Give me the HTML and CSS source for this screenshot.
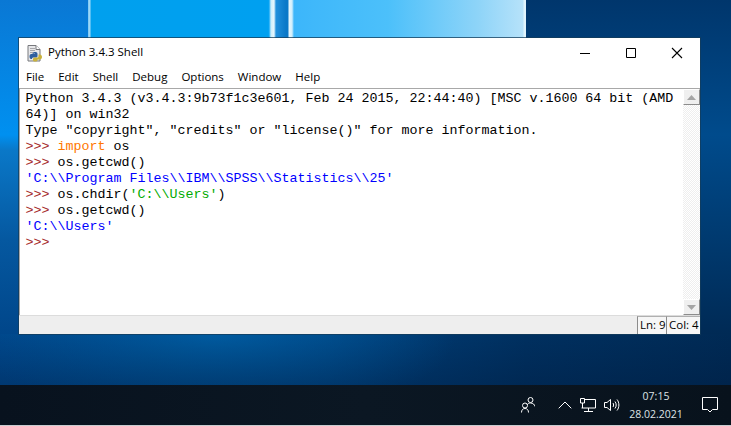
FILE: index.html
```html
<!DOCTYPE html>
<html lang="en">
<head>
<meta charset="utf-8">
<title>Python 3.4.3 Shell</title>
<link rel="stylesheet" href="styles.css">
</head>
<body>
<div class="desktop">
  <section class="window">
    <header class="titlebar">
      <svg class="app-icon" width="18" height="18" viewBox="0 0 18 18">
        <path d="M2 1.500h8l4 4V17H2z" fill="#e8e8ea" stroke="#77787c"/>
        <path d="M10 1.500v4h4" fill="#fff" stroke="#77787c"/>
        <path d="M4 4.500h5M4 6.500h5M4 8.500h3" stroke="#a8a8ac"/>
        <path d="M6.500 10c0-1.500 1-2 2.500-2s2.500 .5 2.500 2v2c0 1-1 1.500-2 1.500H7.500c-1 0-1.500 .5-1.500 1.500H5c-1 0-1.500-1-1.500-2.500s.7-2.500 1.700-2.500H9v-.5z" fill="#2f5f9f"/>
        <path d="M12.500 10.500h1.500c1 0 2 1 2 2.500s-1 2.500-2 2.500h-2.500v.8c0 .8-1 1.200-2.200 1.200S7 17 7 16.200V15c0-1 1-1.500 2-1.500h2c1 0 1.500-.5 1.500-1.500z" fill="#c9b23d"/>
      </svg>
      <span class="title">Python 3.4.3 Shell</span>
      <div class="caption">
        <svg class="caption-btn" width="46" height="29" viewBox="0 0 46 29"><path d="M18 15.500h10" stroke="#000" fill="none"/></svg>
        <svg class="caption-btn" width="46" height="29" viewBox="0 0 46 29"><path d="M18.500 10.500h9v9h-9z" stroke="#000" fill="none"/></svg>
        <svg class="caption-btn" width="46" height="29" viewBox="0 0 46 29"><path d="M18 10l10 10M28 10L18 20" stroke="#000" fill="none" stroke-width="1.100"/></svg>
      </div>
    </header>
    <nav class="menubar">
      <span>File</span><span>Edit</span><span>Shell</span><span>Debug</span><span>Options</span><span>Window</span><span>Help</span>
    </nav>
    <div class="editor">
      <pre class="text">Python 3.4.3 (v3.4.3:9b73f1c3e601, Feb 24 2015, 22:44:40) [MSC v.1600 64 bit (AMD
64)] on win32
Type "copyright", "credits" or "license()" for more information.
<span class="prompt">&gt;&gt;&gt; </span><span class="kw">import</span> os
<span class="prompt">&gt;&gt;&gt; </span>os.getcwd()
<span class="out">'C:\\Program Files\\IBM\\SPSS\\Statistics\\25'</span>
<span class="prompt">&gt;&gt;&gt; </span>os.chdir(<span class="str">'C:\\Users'</span>)
<span class="prompt">&gt;&gt;&gt; </span>os.getcwd()
<span class="out">'C:\\Users'</span>
<span class="prompt">&gt;&gt;&gt;</span></pre>
      <div class="scrollbar">
        <div class="arrow"><svg width="9" height="5" viewBox="0 0 9 5"><path d="M4.500 0L9 5H0z" fill="#a4a4a4"/></svg></div>
        <div class="track"></div>
        <div class="arrow"><svg width="9" height="5" viewBox="0 0 9 5"><path d="M0 0h9L4.500 5z" fill="#a4a4a4"/></svg></div>
      </div>
    </div>
    <footer class="statusbar">
      <span class="cell cell-ln">Ln: 9</span><span class="cell cell-col">Col: 4</span>
    </footer>
  </section>
</div>
<div class="taskbar">
  <svg class="tray people" width="14" height="16" viewBox="0 0 14 16" fill="none" stroke="#fff"><circle cx="9.500" cy="3" r="2.500"/><path d="M6 8c.8-1.500 2-2 3.500-2 2.500 0 4 1.500 4.500 3.500"/><circle cx="4" cy="8.500" r="2.500"/><path d="M.5 15.500c0-2.500 1.300-4 3.500-4s3.500 1.500 3.500 4"/></svg>
  <svg class="tray chevron" width="14" height="8" viewBox="0 0 14 8" fill="none" stroke="#fff"><path d="M.7 7.300L7 1l6.300 6.300"/></svg>
  <svg class="tray network" width="16" height="14" viewBox="0 0 16 14" fill="none" stroke="#fff"><path d="M4.500 1.500h11v8.500H1.500M.5 .5h4v4.500h-4zM2.500 5v5M8.500 10v3M4 13.500h9"/></svg>
  <svg class="tray volume" width="16" height="14" viewBox="0 0 16 14" fill="none" stroke="#fff"><path d="M.5 4.500h2.500L6.500 1.500v11l-3.500-3H.5z"/><path d="M9 5c.8 1.200.8 2.800 0 4M11 3.500c1.600 2 1.600 5 0 7M13 1.500c2.500 3 2.500 8 0 11"/></svg>
  <div class="clock"><span>07:15</span><span>28.02.2021</span></div>
  <svg class="tray notify" width="16" height="16" viewBox="0 0 16 16" fill="none" stroke="#fff"><path d="M.5 .5h15v12h-5l-2.500 2.500-2.500-2.500h-5z"/></svg>
</div>
<div class="edge"></div>
</body>
</html>
```

FILE: styles.css
```css
* { box-sizing: border-box; }
html, body { margin: 0; padding: 0; }
body {
  width: 731px;
  height: 426px;
  overflow: hidden;
  display: flex;
  flex-direction: column;
  font-family: "Open Sans", "Liberation Sans", sans-serif;
  background: #001a33;
}
.desktop {
  position: relative;
  height: 385px;
  flex: none;
  background:
    linear-gradient(90deg,
      #7cc6f2 0, #a8dcf8 2px, #00a0ee 3px, #00a0f0 180px,
      #0aa4f4 181px, #cdeefb 183px, #e8f7fd 186px, #2090dc 188px, #0a78c8 198px, #0a78c8 200px,
      #e8f7fd 201px, #d0eefc 204px, #3cb6fa 206px, #4cc0fa 300px, #8ed4f8 390px, #b6e2fa 435px, #e0f4fd 436px, #e0f4fd 438px) 88px 0 / 438px 40px no-repeat,
    linear-gradient(180deg, #0a78d4 0, #0090f0 135px, #0a78c8 150px, #0558a0 240px, #00468a 334px) 0 0 / 88px 334px no-repeat,
    linear-gradient(180deg, #00366c 0, #004b8c 135px, #002a55 334px) 526px 0 / 205px 334px no-repeat,
    linear-gradient(180deg, rgba(0, 20, 50, 0) 334px, rgba(0, 20, 50, .28) 385px),
    radial-gradient(ellipse 240px 90px at 215px 335px, #005ba0 0%, rgba(0,74,136,0) 100%),
    linear-gradient(90deg, #00468a 0%, #003f7a 45%, #003060 72%, #002a55 100%);
}
.window {
  position: absolute;
  left: 19px;
  top: 38px;
  width: 681px;
  height: 296px;
  display: flex;
  flex-direction: column;
  background: #fff;
  box-shadow: 0 0 0 1px rgba(20, 60, 90, .75);
}
.titlebar {
  flex: none;
  height: 29px;
  display: flex;
  align-items: center;
  padding-left: 7px;
}
.app-icon { flex: none; margin-right: 4px; }
.title { font-size: 11.5px; line-height: 14px; margin-top: -2px; color: #000; white-space: nowrap; }
.caption { margin-left: auto; display: flex; }
.caption-btn { display: block; }
.menubar {
  flex: none;
  height: 21px;
  display: flex;
  align-items: flex-start;
  gap: 14px;
  padding: 2px 0 0 7px;
  font-size: 11.5px;
  line-height: 16px;
  color: #000;
}
.editor {
  flex: none;
  height: 227px;
  display: flex;
  border-top: 1px solid #a8a8a8;
  border-left: 1px solid #a8a8a8;
}
.text {
  flex: 1;
  margin: 0;
  padding: 2px 0 0 5.500px;
  font-family: "Liberation Mono", monospace;
  font-size: 13.33px;
  line-height: 16px;
  color: #000;
  overflow: hidden;
}
.prompt { color: #a52a2a; }
.kw { color: #ff7700; }
.out { color: #0000ff; }
.str { color: #00aa00; }
.scrollbar {
  flex: none;
  width: 17px;
  display: flex;
  flex-direction: column;
  background: #fff;
}
.arrow {
  flex: none;
  height: 16px;
  display: flex;
  align-items: center;
  justify-content: center;
  background: #efefef;
  border: 1px solid;
  border-color: #fff #8c8c8c #8c8c8c #fff;
}
.track {
  flex: 1;
  background: repeating-conic-gradient(#eee 0 25%, #fff 0 50%) 0 0 / 2px 2px;
}
.statusbar {
  flex: 1;
  display: flex;
  justify-content: flex-end;
  align-items: stretch;
  background: #eeeeee;
  border-top: 1px solid #dcdcdc;
  font-size: 11.5px;
  line-height: 16px;
  color: #000;
}
.cell {
  display: flex;
  align-items: flex-start;
  padding-left: 2px;
  background: #f6f6f6;
  border-left: 1px solid #8c8c8c;
  border-top: 1px solid #b0b0b0;
  white-space: nowrap;
}
.cell-ln { width: 29px; }
.cell-col { width: 34px; }
.taskbar {
  flex: none;
  height: 40px;
  display: flex;
  align-items: center;
  background: linear-gradient(90deg, #08121e, #0b1723 50%, #08121c);
  color: #fff;
}
.tray { flex: none; display: block; }
.people { margin-left: 521px; }
.chevron { margin-left: 23px; }
.network { margin-left: 8px; }
.volume { margin-left: 8px; }
.clock {
  flex: none;
  width: 60px;
  margin-left: 6px;
  display: flex;
  flex-direction: column;
  align-items: center;
  font-size: 10.5px;
  line-height: 18px;
  color: #dfe3e6;
}
.notify { margin-left: 16px; }
.edge { flex: 1; background: #c8ccd0; }
```
